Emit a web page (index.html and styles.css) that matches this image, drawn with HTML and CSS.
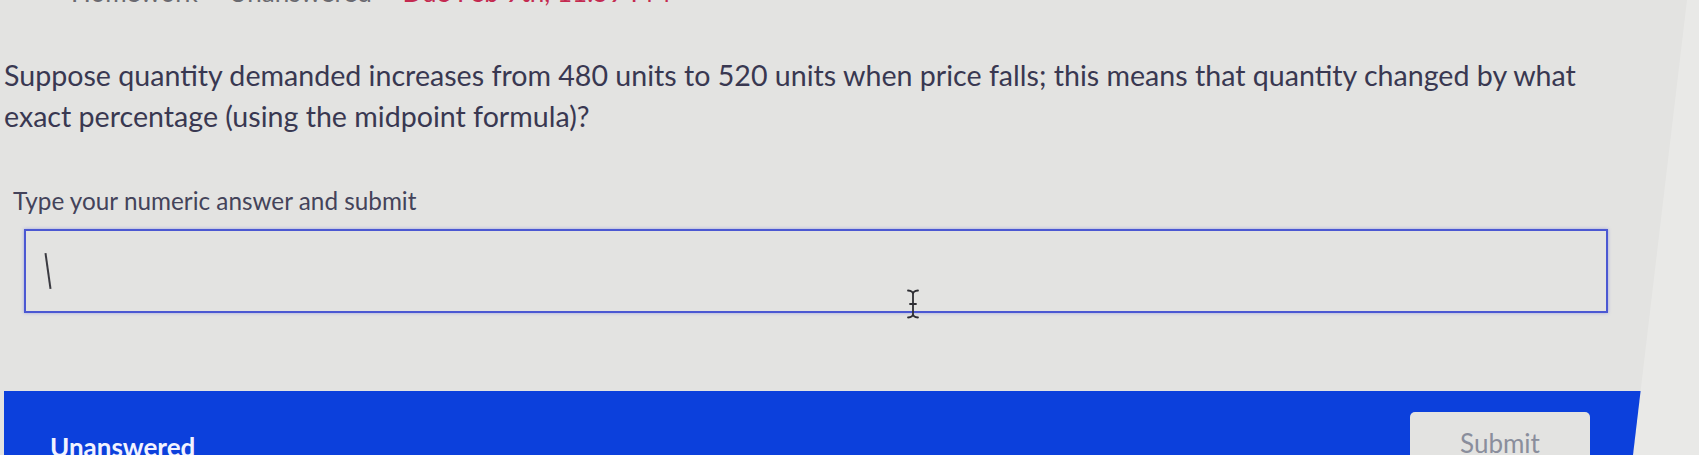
FILE: index.html
```html
<!DOCTYPE html>
<html lang="en">
<head>
<meta charset="utf-8">
<title>Question</title>
<link rel="stylesheet" href="styles.css">
</head>
<body>
<div class="page">
  <div class="meta">
    <span class="meta-gray">Homework</span>
    <span class="dot">·</span>
    <span class="meta-gray">Unanswered</span>
    <span class="dot">·</span>
    <span class="meta-red">Due Feb 9th, 11:59 PM</span>
  </div>
  <p class="question">Suppose quantity demanded increases from 480 units to 520 units when price falls; this means that quantity changed by what exact percentage (using the midpoint formula)?</p>
  <p class="prompt">Type your numeric answer and submit</p>
  <div class="answer">
    <span class="caret"></span>
    <svg class="ibeam" width="14" height="30" viewBox="0 0 14 30" aria-hidden="true">
      <path d="M2 1.5 Q7 2 7 5 Q7 2 12 1.5 M7 5 V25 M2 28.5 Q7 28 7 25 Q7 28 12 28.5 M4 15 H10" fill="none" stroke="#2e2e33" stroke-width="1.8" stroke-linecap="round"/>
    </svg>
  </div>
  <div class="footer">
    <span class="status">Unanswered</span>
    <button class="submit" type="button">Submit</button>
  </div>
</div>
</body>
</html>
```
FILE: styles.css
```css
html, body {
  margin: 0;
  padding: 0;
  height: 100%;
  overflow: hidden;
}
body {
  background: #e9e9e7;
  font-family: Lato, "Open Sans", sans-serif;
}
.page {
  height: 455px;
  background: #e3e3e1;
  clip-path: polygon(0 0, 1687px 0, 1633px 100%, 0 100%);
  display: flex;
  flex-direction: column;
  overflow: hidden;
}
.meta {
  font-size: 26px;
  line-height: 30px;
  height: 30px;
  margin-top: -23px;
  padding-left: 71px;
  display: flex;
  gap: 12px;
  color: #6a6a70;
  flex-shrink: 0;
}
.meta-red { color: #c42a50; }
.dot { color: #8a8a90; }
.question {
  margin: 48px 0 0 4px;
  font-size: 28.6px;
  line-height: 41px;
  color: #393851;
  width: 1620px;
}
.prompt {
  margin: 49px 0 0 13px;
  font-size: 24.3px;
  line-height: 30px;
  color: #44435a;
}
.answer {
  margin: 13px 0 0 24px;
  width: 1580px;
  height: 80px;
  flex-shrink: 0;
  border: 2px solid #4b58d2;
  box-shadow: 0 0 3px rgba(90, 100, 230, 0.5);
  position: relative;
}
.caret {
  display: block;
  width: 2px;
  height: 36px;
  background: #3a3a40;
  margin: 22px 0 0 21px;
  transform: rotate(-8deg);
}
.ibeam {
  position: absolute;
  left: 880px;
  top: 58px;
}
.footer {
  margin-top: 78px;
  margin-left: 4px;
  flex: 1;
  background: #0c40dc;
  display: flex;
  justify-content: space-between;
  align-items: flex-start;
  padding: 21px 109px 0 46px;
}
.status {
  color: #f2f3ff;
  font-size: 26px;
  font-weight: 700;
  margin-top: 19px;
}
.submit {
  width: 180px;
  height: 60px;
  background: #e3e3e1;
  border: none;
  border-radius: 5px;
  font-family: Lato, "Open Sans", sans-serif;
  font-size: 26px;
  color: #8a8e9c;
  padding-top: 2px;
}
```
